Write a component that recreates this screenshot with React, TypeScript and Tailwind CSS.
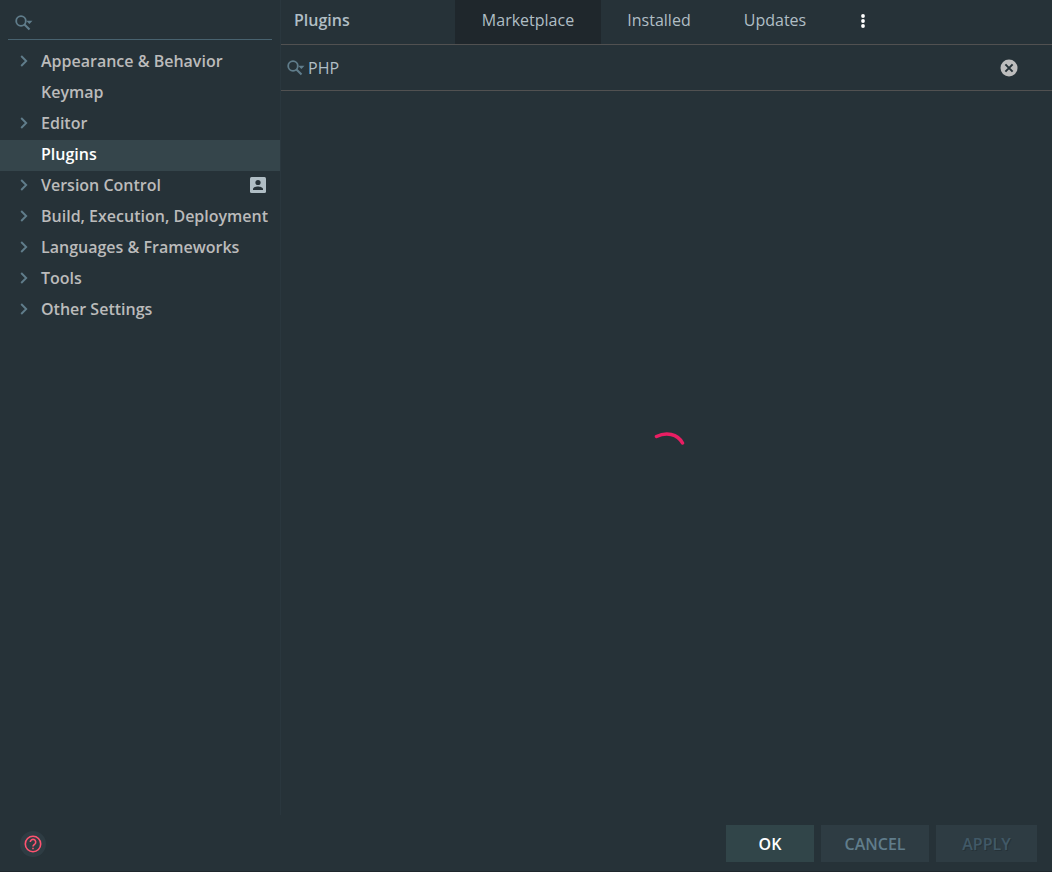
import { useState } from "react";
import { clsx } from "clsx";

type Section = {
  label: string;
  expandable?: boolean;
  projectLevel?: boolean;
};

const sections: Section[] = [
  { label: "Appearance & Behavior", expandable: true },
  { label: "Keymap" },
  { label: "Editor", expandable: true },
  { label: "Plugins" },
  { label: "Version Control", expandable: true, projectLevel: true },
  { label: "Build, Execution, Deployment", expandable: true },
  { label: "Languages & Frameworks", expandable: true },
  { label: "Tools", expandable: true },
  { label: "Other Settings", expandable: true },
];

const tabs = [
  { label: "Marketplace", width: "w-[146px]" },
  { label: "Installed", width: "w-[116px]" },
  { label: "Updates", width: "w-[116px]" },
];

function SearchIcon() {
  return (
    <svg viewBox="0 0 18 16" className="h-4 w-[18px] shrink-0 text-[#607d8b]" fill="none" aria-hidden="true">
      <circle cx="6" cy="6" r="4.8" stroke="currentColor" strokeWidth="1.8" />
      <path d="M9.2 9.2l5.3 5.3" stroke="currentColor" strokeWidth="2.1" />
      <path d="M11.2 5.8h6.300l-3.100 3.200z" fill="currentColor" />
    </svg>
  );
}

function ChevronIcon() {
  return (
    <svg viewBox="0 0 8 12" className="h-3 w-2 text-[#607d8b]" fill="none" aria-hidden="true">
      <path d="M1.2 1L6.200 6l-5 5" stroke="currentColor" strokeWidth="1.9" />
    </svg>
  );
}

function ProjectIcon() {
  return (
    <svg viewBox="0 0 16 16" className="size-4" aria-label="Project level setting">
      <rect width="16" height="16" rx="1.5" fill="#b0bec5" />
      <circle cx="8" cy="5.5" r="2.6" fill="#263238" />
      <path d="M3 13v-.9c0-1.700 3.200-2.600 5-2.600s5 .9 5 2.600v.9z" fill="#263238" />
    </svg>
  );
}

function ClearIcon() {
  return (
    <svg viewBox="0 0 18 18" className="size-[18px]" aria-hidden="true">
      <circle cx="9" cy="9" r="8.5" fill="#bdbdbd" />
      <path d="M5.4 5.400l7.200 7.200M12.600 5.400l-7.200 7.200" stroke="#263238" strokeWidth="2" />
    </svg>
  );
}

function MoreIcon() {
  return (
    <svg viewBox="0 0 4 14" className="h-[14px] w-1" fill="#fff" aria-hidden="true">
      <circle cx="2" cy="2" r="1.9" />
      <circle cx="2" cy="7" r="1.9" />
      <circle cx="2" cy="12" r="1.9" />
    </svg>
  );
}

function HelpIcon() {
  return (
    <svg viewBox="0 0 18 18" className="size-[18px]" fill="none" aria-hidden="true">
      <circle cx="9" cy="9" r="7.7" stroke="#ff5370" strokeWidth="1.6" />
      <path
        d="M6.3 7.100a2.700 2.700 0 1 1 4.600 1.900C9.900 9.900 9 10.200 9 11.500M9 12.700v1.500"
        stroke="#ff5370"
        strokeWidth="1.6"
      />
    </svg>
  );
}

function Spinner() {
  return (
    <svg viewBox="0 0 32 32" className="size-8" fill="none" role="img" aria-label="Loading">
      <path d="M3.500 5.500C13 .8 24.500 2.500 29.500 12" stroke="#e91e63" strokeWidth="3.5" strokeLinecap="round" />
    </svg>
  );
}

function Sidebar() {
  const [selected, setSelected] = useState("Plugins");

  return (
    <aside className="w-[281px] shrink-0 border-r border-[#2a373e]">
      <label className="mx-2 flex h-10 items-center border-b border-[#48626f] pt-[6px] pl-[7px]">
        <SearchIcon />
        <input type="text" aria-label="Search settings" className="min-w-0 flex-1 bg-transparent px-1 outline-none" />
      </label>
      <nav className="pt-[7px]">
        {sections.map((s) => (
          <button
            key={s.label}
            type="button"
            onClick={() => setSelected(s.label)}
            className={clsx(
              "flex h-[31px] w-full items-center pr-[14px] pb-[3px] pl-5 text-left font-semibold whitespace-nowrap",
              s.label === selected ? "bg-[#35454b] text-white" : "text-[#bbbbbb]",
            )}
          >
            <span className="w-[21px] shrink-0">{s.expandable && <ChevronIcon />}</span>
            <span className="flex-1">{s.label}</span>
            {s.projectLevel && <ProjectIcon />}
          </button>
        ))}
      </nav>
    </aside>
  );
}

function PluginsPanel() {
  const [tab, setTab] = useState("Marketplace");
  const [query, setQuery] = useState("PHP");

  return (
    <main className="flex min-w-0 flex-1 flex-col">
      <header className="flex h-[45px] border-b border-[#515151] text-[#b0bec5]">
        <h1 className="w-[174px] pt-2 pl-[13px] font-semibold">Plugins</h1>
        {tabs.map((t) => (
          <button
            key={t.label}
            type="button"
            onClick={() => setTab(t.label)}
            className={clsx("pb-1 text-center", t.width, t.label === tab && "bg-[#1f272c]")}
          >
            {t.label}
          </button>
        ))}
        <button type="button" aria-label="More options" className="px-7 pb-[2px]">
          <MoreIcon />
        </button>
      </header>
      <div className="flex h-[46px] items-center border-b border-[#515151] pr-[34px] pl-[6px]">
        <SearchIcon />
        <input
          type="text"
          aria-label="Search plugins"
          value={query}
          onChange={(e) => setQuery(e.target.value)}
          className="min-w-0 flex-1 bg-transparent pl-[3px] text-[#b0bec5] outline-none"
        />
        <button type="button" aria-label="Clear search" onClick={() => setQuery("")}>
          <ClearIcon />
        </button>
      </div>
      <div className="flex flex-1 items-center justify-center pb-3 pl-1">
        <Spinner />
      </div>
    </main>
  );
}

export default function App() {
  return (
    <div className="flex min-h-screen flex-col border-b border-[#1f272c] bg-[#263238] font-['Open_Sans','Noto_Sans',sans-serif] text-base leading-6">
      <div className="flex flex-1">
        <Sidebar />
        <PluginsPanel />
      </div>
      <footer className="flex h-14 items-center gap-[7px] pt-px pr-[15px] pl-5 font-semibold">
        <button
          type="button"
          aria-label="Help"
          className="mr-auto flex size-[26px] items-center justify-center rounded-full bg-[#2e3c43]"
        >
          <HelpIcon />
        </button>
        <button type="button" className="h-[37px] w-[88px] bg-[#314549] pt-px text-white">
          OK
        </button>
        <button type="button" className="h-[37px] w-[108px] bg-[#2e3c43] pt-px text-[#607d8b]">
          CANCEL
        </button>
        <button
          type="button"
          disabled
          className="h-[37px] w-[101px] bg-[#2e3c43] pt-px text-[#415967] [text-shadow:1px_1px_0_#263238]"
        >
          APPLY
        </button>
      </footer>
    </div>
  );
}
